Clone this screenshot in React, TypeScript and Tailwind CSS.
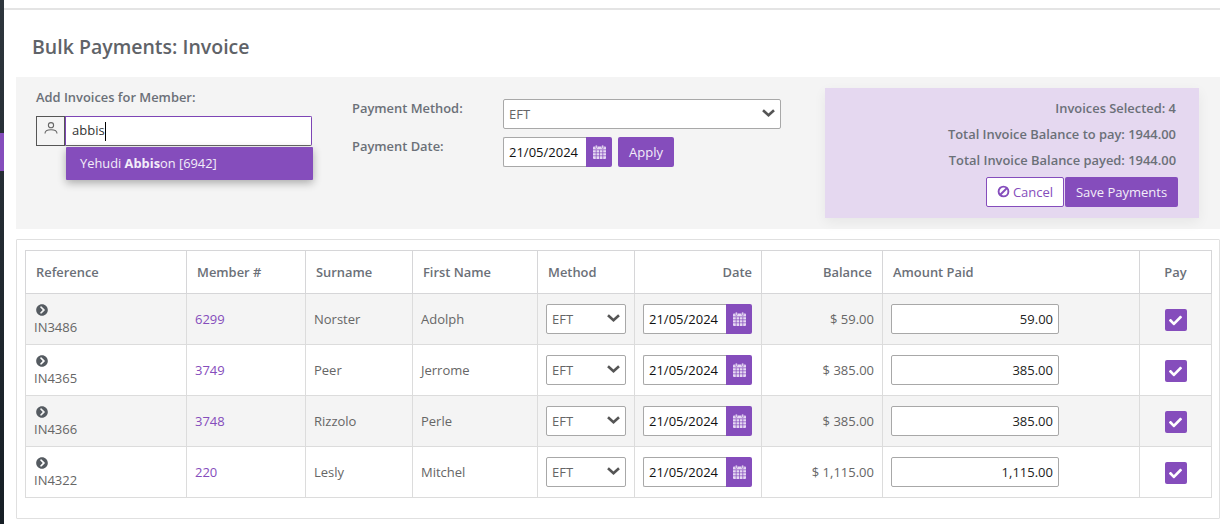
import React from "react";
import { FaCheck, FaChevronCircleRight } from "react-icons/fa";

const rows = [
  { ref: "IN3486", member: "6299", surname: "Norster", first: "Adolph", balance: "$ 59.00", paid: "59.00" },
  { ref: "IN4365", member: "3749", surname: "Peer", first: "Jerrome", balance: "$ 385.00", paid: "385.00" },
  { ref: "IN4366", member: "3748", surname: "Rizzolo", first: "Perle", balance: "$ 385.00", paid: "385.00" },
  { ref: "IN4322", member: "220", surname: "Lesly", first: "Mitchel", balance: "$ 1,115.00", paid: "1,115.00" },
];

function CalendarIcon() {
  return (
    <svg width="13" height="14" viewBox="0 0 13 14">
      <rect x="0" y="1.500" width="13" height="12.500" rx="1" fill="#e6d9f3" />
      <rect x="2.300" y="0" width="2" height="3.500" rx="1" fill="#e6d9f3" stroke="#854dbc" strokeWidth="0.5" />
      <rect x="8.700" y="0" width="2" height="3.500" rx="1" fill="#e6d9f3" stroke="#854dbc" strokeWidth="0.5" />
      <path
        d="M0 4.800h13M0 7.800h13M0 10.800h13M3.200 4.800V14M6.500 4.800V14M9.800 4.800V14"
        stroke="#854dbc"
        strokeWidth="0.7"
        fill="none"
      />
    </svg>
  );
}

function DateField() {
  return (
    <div className="flex h-[30px] w-[109px]">
      <input
        readOnly
        value="21/05/2024"
        className="h-full w-[83px] rounded-l-[2px] border border-r-0 border-[#a8a8a8] bg-white pl-[5px] text-[13px] text-[#111] outline-none"
      />
      <span className="flex h-full w-[26px] items-center justify-center rounded-r-[2px] bg-[#854dbc]">
        <CalendarIcon />
      </span>
    </div>
  );
}

function MethodSelect({ className }: { className: string }) {
  return (
    <div className={`relative h-[30px] ${className}`}>
      <select className="h-full w-full appearance-none rounded-[2px] border border-[#a8a8a8] bg-white pl-[5px] pt-[1px] text-[13px] text-[#666] outline-none">
        <option>EFT</option>
      </select>
      <svg
        width="13"
        height="8"
        viewBox="0 0 13 8"
        fill="none"
        stroke="#555"
        strokeWidth="2.6"
        className="pointer-events-none absolute right-[6px] top-[10px]"
      >
        <path d="M1 1.200l5.500 5 5.500-5" />
      </svg>
    </div>
  );
}

const th = "border border-[#d6d6d8] pt-[2px] text-[12.900px] font-semibold text-[#6b7078]";
const td = "border border-[#dcdcdc] px-[8px] pt-[2px] text-[#666]";
const label = "h-[19px] w-[151px] text-[12.900px] font-semibold leading-[19px] text-[#6b7078]";

export default function App() {
  return (
    <div className="flex h-[524px] w-[1220px] overflow-hidden bg-white font-['Open_Sans',sans-serif] text-[13px]">
      <aside className="flex w-[4px] shrink-0 flex-col bg-gradient-to-b from-[#2e363d] to-[#161e25]">
        <div className="mt-[133px] h-[38px] bg-[#854dbc]" />
      </aside>
      <main className="min-w-0 flex-1">
        <div className="h-[10px] border-b-2 border-[#e4e4e4]" />
        <h1 className="ml-[28px] flex h-[67px] items-center pt-[7px] text-[19.500px] font-semibold text-[#5f6368]">
          Bulk Payments: Invoice
        </h1>
        <section className="ml-[12px] flex h-[152px] bg-[#f4f4f4]">
          <div className="w-[336px] pl-[20px] pt-[11px]">
            <div className="h-[19px] text-[12.900px] font-semibold leading-[19px] text-[#6b7078]">Add Invoices for Member:</div>
            <div className="relative mt-[9px] flex h-[30px] w-[276px]">
              <span className="flex h-full w-[29px] justify-center border border-[#555] pt-[5px] text-[#666]">
                <svg width="14" height="13" viewBox="0 0 14 13" fill="none" stroke="currentColor" strokeWidth="1.100">
                  <circle cx="7" cy="3.200" r="2.600" />
                  <path d="M1 11.500c0-3 2.800-3.800 6-3.800s6 .8 6 3.800" />
                </svg>
              </span>
              <div className="flex h-full flex-1 items-center rounded-r-[2px] border border-[#7d45b5] border-b-[#666] bg-white pl-[6px] text-[#333]">
                abbis
                <span className="h-[19px] w-px bg-black" />
              </div>
              <div className="absolute left-[30px] top-[31px] flex h-[33px] w-[247px] items-center rounded-[1px] bg-[#854dbc] pl-[14px] text-[12.850px] text-[#f3edf9] shadow-[0_3px_8px_rgba(0,0,0,0.3)]">
                Yehudi&nbsp;<b className="font-bold">Abbis</b>on [6942]
              </div>
            </div>
          </div>
          <div className="w-[473px] pt-[22px]">
            <div className="flex">
              <label className={label}>Payment Method:</label>
              <MethodSelect className="w-[278px]" />
            </div>
            <div className="mt-[8px] flex">
              <label className={label}>Payment Date:</label>
              <DateField />
              <button className="ml-[6px] h-[30px] w-[56px] rounded-[2px] bg-[#854dbc] pt-[1px] text-[#f3edf9]">Apply</button>
            </div>
          </div>
          <div className="mt-[11px] flex h-[130px] w-[374px] flex-col items-end bg-[#e5d8f0] pr-[21px] pt-[10px] text-[12.900px] font-semibold text-[#6b7078] shadow-[0_4px_12px_rgba(0,0,0,0.06)]">
            <div className="h-[26px] pr-[2px] leading-[20px]">Invoices Selected: 4</div>
            <div className="h-[26px] pr-[2px] leading-[20px]">Total Invoice Balance to pay: 1944.00</div>
            <div className="h-[26px] pr-[2px] leading-[20px]">Total Invoice Balance payed: 1944.00</div>
            <div className="mt-[1px] flex h-[30px] gap-px text-[13px] font-normal">
              <button className="flex h-[30px] w-[78px] items-center justify-center gap-[3px] rounded-[2px] border border-[#854dbc] bg-white pt-[1px] text-[#854dbc]">
                <svg width="13" height="13" viewBox="0 0 13 13" fill="none" stroke="currentColor" strokeWidth="1.900" className="-mt-[2px]">
                  <circle cx="6.500" cy="6.500" r="4.900" />
                  <path d="M3 10l7-7" />
                </svg>
                Cancel
              </button>
              <button className="h-[30px] w-[113px] rounded-[2px] bg-[#854dbc] pt-[1px] text-[#f3edf9]">Save Payments</button>
            </div>
          </div>
        </section>
        <section className="ml-[12px] mt-[10px] h-[280px] w-[1204px] rounded-[1px] border border-[#e0e0e0] py-[10px] pl-[8px]">
          <table className="w-[1186px] table-fixed border-collapse">
            <colgroup>
              <col className="w-[161px]" />
              <col className="w-[119px]" />
              <col className="w-[107px]" />
              <col className="w-[125px]" />
              <col className="w-[97px]" />
              <col className="w-[127px]" />
              <col className="w-[121px]" />
              <col className="w-[257px]" />
              <col className="w-[72px]" />
            </colgroup>
            <thead>
              <tr className="h-[43px]">
                <th className={`${th} pl-[10px] text-left`}>Reference</th>
                <th className={`${th} pl-[10px] text-left`}>Member #</th>
                <th className={`${th} pl-[10px] text-left`}>Surname</th>
                <th className={`${th} pl-[10px] text-left`}>First Name</th>
                <th className={`${th} pl-[10px] text-left`}>Method</th>
                <th className={`${th} pr-[9px] text-right`}>Date</th>
                <th className={`${th} pr-[10px] text-right`}>Balance</th>
                <th className={`${th} pl-[10px] text-left`}>Amount Paid</th>
                <th className={`${th} text-center`}>Pay</th>
              </tr>
            </thead>
            <tbody>
              {rows.map((r, i) => (
                <tr key={r.ref} className={`h-[51px] ${i % 2 === 0 ? "bg-[#f4f4f4]" : "bg-white"}`}>
                  <td className={td}>
                    <FaChevronCircleRight size={12} className="ml-[2px] text-[#555b61]" />
                    <div className="mt-[3px] leading-[17px]">{r.ref}</div>
                  </td>
                  <td className={`${td} text-[#854dbc]`}>{r.member}</td>
                  <td className={td}>{r.surname}</td>
                  <td className={td}>{r.first}</td>
                  <td className="border border-[#dcdcdc] px-[8px]">
                    <MethodSelect className="w-[80px]" />
                  </td>
                  <td className="border border-[#dcdcdc] px-[8px]">
                    <DateField />
                  </td>
                  <td className={`${td} text-right`}>{r.balance}</td>
                  <td className="border border-[#dcdcdc] px-[8px]">
                    <input
                      readOnly
                      value={r.paid}
                      className="h-[30px] w-[168px] rounded-[2px] border border-[#a8a8a8] bg-white pr-[5px] text-right text-[13px] text-[#222] outline-none"
                    />
                  </td>
                  <td className="border border-[#dcdcdc] pt-[2px]">
                    <span className="mx-auto flex h-[22px] w-[22px] items-center justify-center rounded-[2px] bg-[#854dbc] text-white">
                      <FaCheck size={13} />
                    </span>
                  </td>
                </tr>
              ))}
            </tbody>
          </table>
        </section>
      </main>
    </div>
  );
}
